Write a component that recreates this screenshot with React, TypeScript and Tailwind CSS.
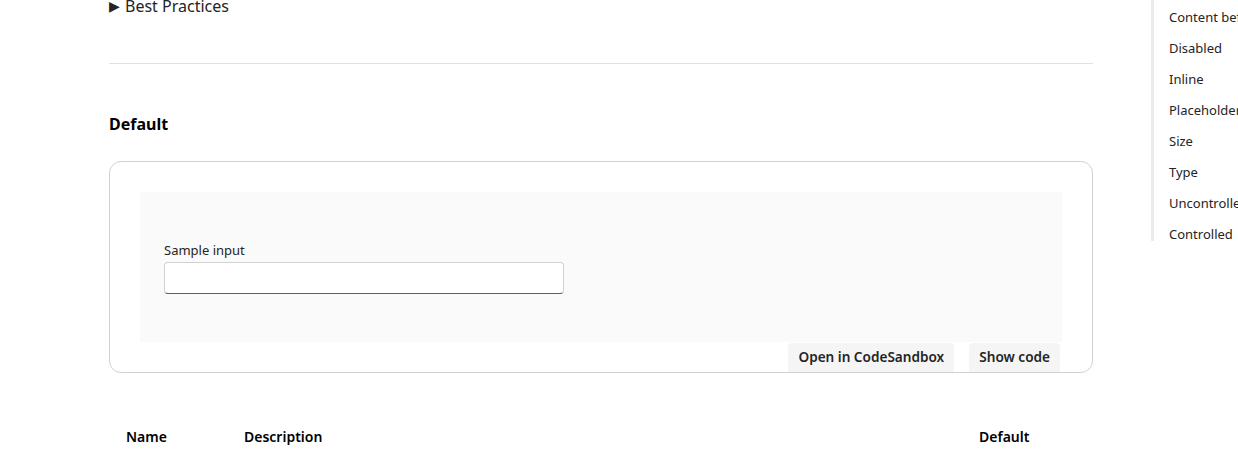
const sections = ['Content before/after', 'Disabled', 'Inline', 'Placeholder', 'Size', 'Type', 'Uncontrolled', 'Controlled'];

const App = () => {
    return (
        <div
            className="flex h-[455px] w-[1238px] overflow-hidden bg-white text-[#242424]"
            style={{ fontFamily: '"Noto Sans", "Open Sans", sans-serif' }}
        >
            <div className="ml-[109px] w-[984px] shrink-0">
                <div className="-mt-[5px] flex h-[22px] items-center gap-[5px] text-base leading-[22px]">
                    <span className="text-[14px]">▶</span>
                    <span>Best Practices</span>
                </div>
                <div className="mt-[46px] border-t border-[#e0e0e0]" />
                <h2 className="mt-[49px] text-base leading-[22px] font-bold text-black">Default</h2>
                <div className="mt-[26px] flex flex-col rounded-xl border border-[#d1d1d1] px-[30px] pt-[30px]">
                    <div className="flex h-[150px] flex-col justify-center bg-[#fafafa] pl-[24px]">
                        <label className="text-[13px] leading-[18px]">Sample input</label>
                        <input
                            type="text"
                            className="mt-[3px] h-[32px] w-[400px] rounded-[4px] border border-[#d1d1d1] border-b-[#616161] bg-white px-2 text-sm outline-none"
                        />
                    </div>
                    <div className="mt-px mr-[2px] flex justify-end gap-[15px]">
                        <button className="h-[29px] rounded-t-[4px] bg-[#f5f5f5] px-[10px] text-[13.6px] font-semibold">
                            Open in CodeSandbox
                        </button>
                        <button className="h-[29px] rounded-t-[4px] bg-[#f5f5f5] px-[10px] text-[13.6px] font-semibold">
                            Show code
                        </button>
                    </div>
                </div>
                <div className="mt-[54px] grid grid-cols-[118px_735px_1fr] pl-[17px] text-sm leading-[20px] font-semibold text-black">
                    <span>Name</span>
                    <span>Description</span>
                    <span>Default</span>
                </div>
            </div>
            <div className="ml-[58px] h-[241px] shrink-0 border-l-[3px] border-[#ebebeb]">
                <ul className="pt-[2px] pl-[15px] text-[13px] whitespace-nowrap">
                    {sections.map((s) => (
                        <li key={s} className="h-[31px] leading-[31px]">
                            {s}
                        </li>
                    ))}
                </ul>
            </div>
        </div>
    );
};

export default App;
